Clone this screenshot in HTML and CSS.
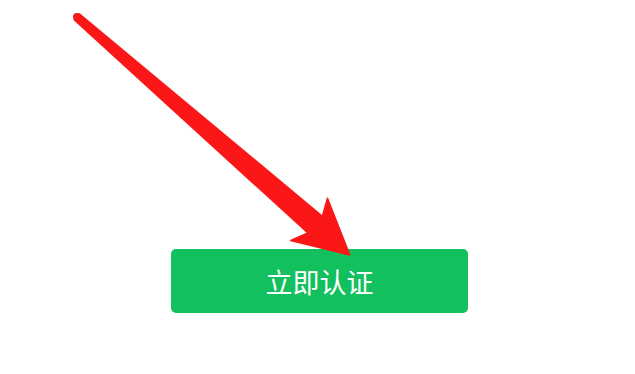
FILE: index.html
```html
<!DOCTYPE html>
<html lang="zh-CN">
<head>
<meta charset="utf-8">
<title>立即认证</title>
<link rel="stylesheet" href="styles.css">
</head>
<body>
<main class="page">
  <button class="verify-btn" type="button">立即认证</button>
  <svg class="arrow" width="635" height="374" viewBox="0 0 635 374" aria-hidden="true">
    <circle cx="77" cy="17" r="4" fill="#fb1717"/>
    <path d="M79.6 14.0 L322.4 216.3 L327.5 198.3 L349.8 254.9 L290.7 240.5 L307.9 233.0 L74.4 20.0 Z" fill="#fb1717" stroke="#fb1717" stroke-width="1.5" stroke-linejoin="round"/>
  </svg>
</main>
</body>
</html>
```

FILE: styles.css
```css
html, body {
  margin: 0;
  padding: 0;
  background: #ffffff;
}

.page {
  position: relative;
  width: 635px;
  height: 374px;
  box-sizing: border-box;
  padding: 249px 0 0 171px;
  overflow: hidden;
}

.verify-btn {
  display: flex;
  align-items: center;
  justify-content: center;
  width: 297px;
  height: 64px;
  margin: 0;
  padding: 0;
  border: none;
  border-radius: 5px;
  background: #13c05e;
  color: #ffffff;
  font-family: "Noto Sans CJK SC", "Noto Sans", sans-serif;
  font-size: 27px;
  font-weight: 400;
  letter-spacing: 0;
}

.arrow {
  position: absolute;
  top: 0;
  left: 0;
  pointer-events: none;
}
```
